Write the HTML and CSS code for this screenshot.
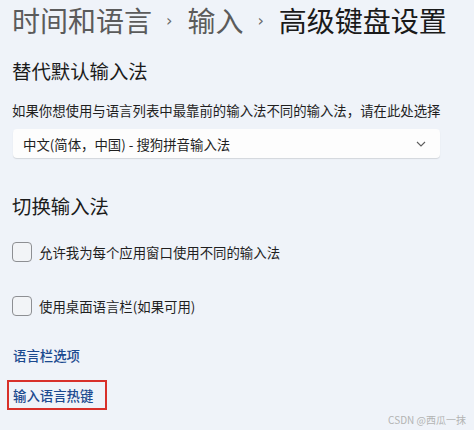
FILE: index.html
```html
<!DOCTYPE html>
<html lang="zh-CN">
  <head>
    <meta charset="UTF-8" />
    <meta name="viewport" content="width=device-width, initial-scale=1.0" />
    <title>高级键盘设置</title>
    <link rel="stylesheet" href="styles.css">
  </head>
  <body>
    <div class="page">
      <h1 class="crumbs">
        <span class="crumb">时间和语言</span>
        <span class="sep">›</span>
        <span class="crumb">输入</span>
        <span class="sep">›</span>
        <span class="current">高级键盘设置</span>
      </h1>

      <h2 class="section">替代默认输入法</h2>
      <p class="desc">如果你想使用与语言列表中最靠前的输入法不同的输入法，请在此处选择</p>
      <div class="select">
        <span>中文(简体，中国) - 搜狗拼音输入法</span>
        <svg class="chev" width="10" height="6" viewBox="0 0 10 6">
          <path d="M1 1 L5 5 L9 1" fill="none" stroke="#5d5d5d" stroke-width="1.1" />
        </svg>
      </div>

      <h2 class="section switch">切换输入法</h2>
      <label class="check first"><span class="box"></span>允许我为每个应用窗口使用不同的输入法</label>
      <label class="check"><span class="box"></span>使用桌面语言栏(如果可用)</label>

      <a class="link first-link" href="#">语言栏选项</a>
      <a class="link marked" href="#">输入语言热键</a>
    </div>
    <div class="mark">CSDN @西瓜一抹</div>
  </body>
</html>
```

FILE: styles.css
```css
body {
  margin: 0;
  background-color: #eff3f9;
  font-family: "Noto Sans CJK SC", "Noto Sans", sans-serif;
  color: #1b1b1b;
  height: 430px;
  overflow: hidden;
}

.page {
  padding: 0 12px;
  display: flex;
  flex-direction: column;
  align-items: flex-start;
}

.crumbs {
  margin: 0;
  font-size: 28px;
  font-weight: normal;
  line-height: 41px;
  display: flex;
  align-items: center;
  white-space: nowrap;
}

.crumb {
  color: #5b5b5b;
}

.current {
  color: #1a1a1a;
}

.sep {
  font-family: "DejaVu Sans", sans-serif;
  font-size: 16px;
  line-height: 20px;
  color: #6a6a6a;
  margin: 0 15px 0 14px;
}

.section {
  margin: 17px 0 0;
  font-size: 19.4px;
  font-weight: normal;
  line-height: 26px;
}

.desc {
  margin: 16px 0 0;
  font-size: 13.4px;
  line-height: 20px;
  color: #1f1f1f;
  white-space: nowrap;
}

.select {
  margin-top: 9px;
  box-sizing: border-box;
  width: 427px;
  height: 29px;
  margin-left: 1px;
  padding: 0 14px 0 10px;
  display: flex;
  align-items: center;
  justify-content: space-between;
  background-color: #fdfdfd;
  border-radius: 4px;
  box-shadow: 0 1px 1px rgba(0, 0, 0, 0.12);
  font-size: 13.4px;
  color: #1f1f1f;
}

.section.switch {
  margin-top: 35px;
}

.check {
  display: flex;
  align-items: center;
  font-size: 13.4px;
  line-height: 20px;
  color: #1f1f1f;
  margin-top: 34px;
}

.check.first {
  margin-top: 23px;
}

.box {
  box-sizing: border-box;
  width: 20px;
  height: 20px;
  margin-right: 7px;
  border: 1px solid #8d8f93;
  border-radius: 4px;
  background-color: #f2f4f7;
}

.link {
  display: block;
  font-size: 13.4px;
  line-height: 20px;
  color: #1b4a8f;
  text-decoration: none;
  font-weight: 500;
}

.first-link {
  margin-top: 29px;
  margin-left: 1px;
}

.marked {
  margin: 15px 0 0 -5px;
  padding: 3px 12px 3px 4px;
  border: 2px solid #d8302a;
}

.mark {
  position: absolute;
  right: 8px;
  bottom: 3px;
  font-size: 10px;
  color: #b3b3b3;
  font-family: "Noto Sans CJK SC", sans-serif;
}
```
